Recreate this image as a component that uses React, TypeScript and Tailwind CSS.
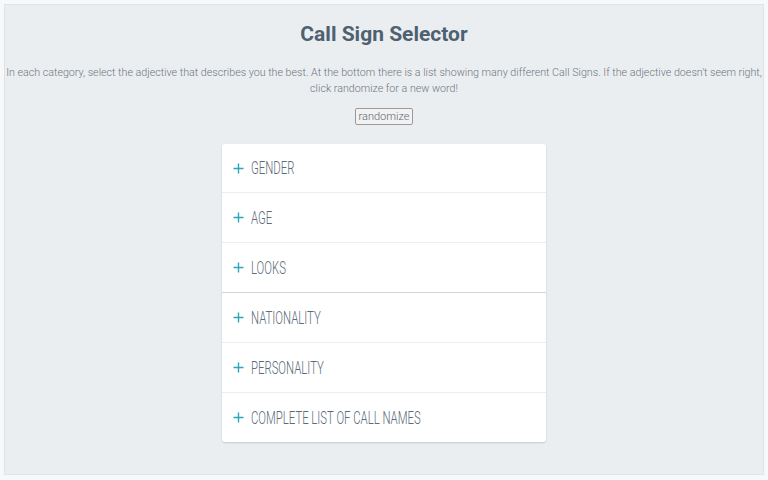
import React from 'react';

const sections = [
  'Gender',
  'Age',
  'Looks',
  'Nationality',
  'Personality',
  'Complete List of Call Names',
];

function Plus() {
  return (
    <svg className="w-[11px] h-[11px] mr-[7px] shrink-0" viewBox="0 0 11 11">
      <path d="M5.5 0.5v10M0.5 5.5h10" stroke="#2aa8b8" strokeWidth="1.4" fill="none" />
    </svg>
  );
}

export default function App() {
  return (
    <div className="w-[768px] h-[480px] bg-[#f7f8f9] p-[4px] font-['Roboto',sans-serif]">
      <div className="h-[471px] bg-[#ebeef1] border border-[#dfe3e6] flex flex-col items-center">
        <h1 className="mt-[15px] text-[21px] leading-[28px] font-bold text-[#4e6170]">
          Call Sign Selector
        </h1>
        <p className="mt-[17px] text-center text-[10.7px] leading-[16px] font-light text-[#6d767d] w-full">
          <span className="block whitespace-nowrap">
            In each category, select the adjective that describes you the best. At the bottom there is a list showing
            many different Call Signs. If the adjective doesn't seem right,
          </span>
          <span className="block whitespace-nowrap">click randomize for a new word!</span>
        </p>
        <button className="mt-[11px] h-[17px] px-[3px] text-[11px] leading-[14px] font-light text-[#5c6770] bg-[#f2f2f2] border border-[#9a9a9a] rounded-[2px]">
          randomize
        </button>
        <div className="mt-[19px] w-[324px] bg-white rounded-[3px] shadow-[0_1px_2px_rgba(0,0,0,0.15)]">
          {sections.map((s, i) => (
            <div
              key={s}
              className={
                'flex items-center pl-[11px] ' +
                (i === 0
                  ? 'h-[48px]'
                  : i === 3
                    ? 'h-[50px] border-t border-[#d3d6d9]'
                    : 'h-[50px] border-t border-[#eceef0]')
              }
            >
              <Plus />
              <span className="inline-block origin-left scale-x-[0.63] whitespace-nowrap uppercase text-[18px] leading-[20px] text-[#5b6b78] font-light">
                {s}
              </span>
            </div>
          ))}
        </div>
      </div>
    </div>
  );
}
